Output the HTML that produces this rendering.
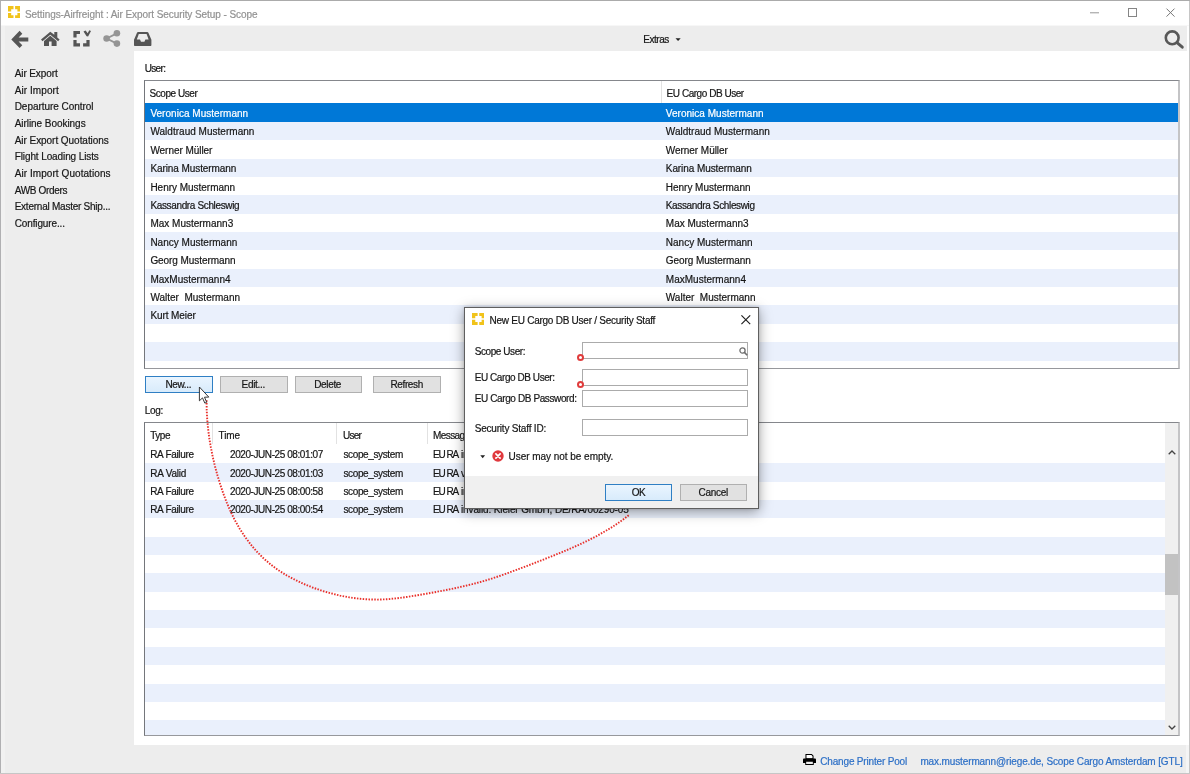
<!DOCTYPE html>
<html>
<head>
<meta charset="utf-8">
<title>Settings-Airfreight : Air Export Security Setup - Scope</title>
<style>
*{box-sizing:border-box;margin:0;padding:0}
html,body{width:1190px;height:774px;overflow:hidden}
body{position:relative;background:#ededed;font-family:"Liberation Sans",sans-serif;font-size:10px;color:#161616;line-height:12px}
#app{position:absolute;left:0;top:0;width:1190px;height:774px;will-change:transform}
.abs{position:absolute}
.t{position:absolute;white-space:pre;line-height:12px;font-size:10px;-webkit-text-stroke:0.200px currentColor}
#titlebar{position:absolute;left:0;top:0;width:1190px;height:25px;background:#fff;border-bottom:1px solid #f7f7f7;box-sizing:content-box}
#toolbar{position:absolute;left:0;top:26px;width:1187px;height:25px;background:#ededed}
#main{position:absolute;left:134px;top:51px;width:1055px;height:694px;background:#fff}
#rightstrip{position:absolute;left:1187px;top:26px;width:2px;height:719px;background:#fefefe}
#rightstrip2{position:absolute;left:1186px;top:745px;width:3px;height:28px;background:#f5f5f5}
#frameL{position:absolute;left:0;top:0;width:1px;height:774px;background:#b0b0b2}
#leftband{position:absolute;left:1px;top:26px;width:4px;height:747px;background:#f1f1f1}
#frameR{position:absolute;left:1189px;top:0;width:1px;height:774px;background:#c6c6c6}
#frameT{position:absolute;left:0;top:0;width:1190px;height:1px;background:#ababab}
#frameB{position:absolute;left:0;top:773px;width:1190px;height:1px;background:#c6c6c6}
.tbl{position:absolute;border:1px solid #85878c;border-left-color:#74767b;border-right:2px solid #c4c4c6;border-bottom-color:#97989c;background:#fff;overflow:hidden}
.row{position:absolute;left:0;width:100%}
.row.alt{background:#eaf0fc}
.row.sel{background:#0078d7;color:#fff}
.btn{position:absolute;height:17px;border:1px solid #b0b0b0;background:#e1e1e1}
.btn.focus{border:1px solid #2f7fc4;background:linear-gradient(#eaf5ff,#d8ebfb)}
.vsep{position:absolute;width:1px;background:#e2e2e2}
#dlg{position:absolute;left:464px;top:307px;width:295px;height:202px;background:#fff;border:1px solid #5f5f5f;box-shadow:0 3px 12px rgba(0,0,0,.38),0 0 3px rgba(0,0,0,.15)}
#dlg .f{position:absolute;left:116.500px;width:166px;height:17px;border:1px solid #ababab;background:#fff}
#dfoot{position:absolute;left:0;top:167.500px;width:293px;height:32.500px;background:#f0f0f0}
.rc{position:absolute;width:7px;height:7px;border:2px solid #e03c3c;border-radius:50%;background:#fff}
</style>
</head>
<body>
<div id="app">
<div id="titlebar">
  <svg class="abs" style="left:7.600px;top:5.800px" width="12.600" height="12.400" viewBox="0 0 12.600 12.600" preserveAspectRatio="none">
    <g fill="#f1c31a"><path d="M0 0h5.500v3.200H3.200v2.300H0z"/><path d="M7.100 0h5.500v5.500H9.400V3.200H7.100z"/><path d="M0 7.100h3.200v2.300h2.300v3.200H0z"/><path d="M12.600 7.100v5.500H7.100V9.400h2.300V7.100z"/></g>
  </svg>
  <span class="t" style="left:25.00px;top:8.50px;letter-spacing:-0.068px;color:#929292;">Settings-Airfreight : Air Export Security Setup - Scope</span>
  <svg class="abs" style="left:1085px;top:5px" width="100" height="18" viewBox="0 0 100 18">
    <path d="M5 7.800h9" stroke="#969696" stroke-width="1" fill="none"/>
    <rect x="43.500" y="3.500" width="8" height="8" stroke="#858585" stroke-width="1" fill="none"/>
    <path d="M81.500 3.600l8 8M89.500 3.600l-8 8" stroke="#777" stroke-width="1" fill="none"/>
  </svg>
</div>
<div id="toolbar">
  <svg class="abs" style="left:0;top:0" width="200" height="25" viewBox="0 26 200 25">
    <g fill="#555">
    <!-- back arrow -->
    <path d="M19.600 30.800L11.300 39.400l8.300 8.500 2.700-2.700-3.700-3.800H28.300v-3.900H18.600l3.700-3.800z"/>
    <!-- home -->
    <path d="M50.300 31.700L41 39.600l1.500 1.700 7.800-6.600 7.800 6.600 1.500-1.700-2.300-2V31.900h-3v2.800z"/>
    <path d="M50.300 35.700L44 41V46h5v-4.600h2.600V46h5V41z"/>
    <!-- fullscreen -->
    <path d="M73.400 30.900h6.600v3.200H76.600v3.300h-3.200z"/>
    <path d="M73.400 46.400v-6.500h3.200v3.300h3.400v3.200z"/>
    <path d="M89.600 46.400h-6.500v-3.200h3.300v-3.300h3.200z"/>
    <path d="M83.500 31.400L85.600 30.500L87.700 33.300L89.300 30.300L91 31.100L88.100 36.400L86.600 36.200Z"/>
    <!-- inbox -->
    <path fill-rule="evenodd" d="M138.200 31.900h9c.6 0 1 .3 1.200.9l3 6.900v5.200c0 .6-.4 1-1 1H135c-.6 0-1-.4-1-1v-5.200l3-6.900c.2-.6.600-.9 1.200-.9zM138.800 34.100l-2 5.400h3.200l1 2.200h3.400l1-2.200h3.200l-2-5.400z"/>
    </g>
    <!-- share -->
    <g fill="#959595"><circle cx="106.600" cy="38.500" r="3.300"/><circle cx="116.900" cy="33.300" r="3.300"/><circle cx="116.900" cy="43.600" r="3.300"/><path d="M106.600 38.500L116.900 33.300M106.600 38.500L116.900 43.600" stroke="#959595" stroke-width="1.900" fill="none"/></g>
  </svg>
  <svg class="abs" style="left:675px;top:12px" width="7" height="4" viewBox="0 0 7 4"><path d="M0.500 0.200h5.200L3.100 3z" fill="#222"/></svg>
  <!-- search -->
  <svg class="abs" style="left:1164px;top:1px" width="22" height="23" viewBox="0 0 22 23"><circle cx="8.200" cy="10.800" r="6.400" stroke="#585858" stroke-width="2.600" fill="none"/><path d="M13 15.600L18.300 20.200" stroke="#585858" stroke-width="2.900" stroke-linecap="round"/></svg>
</div>
<span class="t" style="left:643.20px;top:33.70px;letter-spacing:-0.441px;">Extras</span>
<div id="rightstrip"></div><div id="rightstrip2"></div>
<div id="sidebar">
<span class="t si" style="left:14.70px;top:68.00px;letter-spacing:-0.101px;">Air Export</span>
<span class="t si" style="left:14.70px;top:84.67px;letter-spacing:0.076px;">Air Import</span>
<span class="t si" style="left:14.70px;top:101.34px;letter-spacing:-0.040px;">Departure Control</span>
<span class="t si" style="left:14.70px;top:118.01px;letter-spacing:-0.051px;">Airline Bookings</span>
<span class="t si" style="left:14.70px;top:134.68px;letter-spacing:-0.045px;">Air Export Quotations</span>
<span class="t si" style="left:14.70px;top:151.35px;letter-spacing:-0.104px;">Flight Loading Lists</span>
<span class="t si" style="left:14.70px;top:168.02px;letter-spacing:0.067px;">Air Import Quotations</span>
<span class="t si" style="left:14.70px;top:184.69px;letter-spacing:-0.315px;">AWB Orders</span>
<span class="t si" style="left:14.70px;top:201.36px;letter-spacing:-0.242px;">External Master Ship...</span>
<span class="t si" style="left:14.70px;top:218.03px;letter-spacing:-0.125px;">Configure...</span>

</div>
<div id="main">
  <span class="t" style="left:10.70px;top:12.30px;letter-spacing:-0.661px;">User:</span>
  <div class="tbl" style="left:10px;top:29px;width:1036px;height:289px">
    <span class="t" style="left:4.60px;top:7.30px;letter-spacing:-0.455px;">Scope User</span><span class="t" style="left:521.60px;top:7.40px;letter-spacing:-0.461px;">EU Cargo DB User</span>
    <div class="vsep" style="left:516px;top:0;height:22px"></div>
<div class="row sel" style="top:22.40px;height:18.37px"><span class="t" style="left:5.40px;top:4.60px;letter-spacing:0.027px;">Veronica Mustermann</span><span class="t" style="left:520.80px;top:4.60px;letter-spacing:0.027px;">Veronica Mustermann</span></div>
<div class="row alt" style="top:40.77px;height:18.37px"><span class="t" style="left:5.40px;top:4.63px;letter-spacing:0.022px;">Waldtraud Mustermann</span><span class="t" style="left:520.80px;top:4.63px;letter-spacing:0.022px;">Waldtraud Mustermann</span></div>
<div class="row " style="top:59.14px;height:18.37px"><span class="t" style="left:5.40px;top:4.66px;letter-spacing:-0.047px;">Werner Müller</span><span class="t" style="left:520.80px;top:4.66px;letter-spacing:-0.047px;">Werner Müller</span></div>
<div class="row alt" style="top:77.51px;height:18.37px"><span class="t" style="left:5.40px;top:4.69px;letter-spacing:-0.080px;">Karina Mustermann</span><span class="t" style="left:520.80px;top:4.69px;letter-spacing:-0.080px;">Karina Mustermann</span></div>
<div class="row " style="top:95.88px;height:18.37px"><span class="t" style="left:5.40px;top:4.72px;letter-spacing:-0.021px;">Henry Mustermann</span><span class="t" style="left:520.80px;top:4.72px;letter-spacing:-0.021px;">Henry Mustermann</span></div>
<div class="row alt" style="top:114.25px;height:18.37px"><span class="t" style="left:5.40px;top:4.75px;letter-spacing:-0.353px;">Kassandra Schleswig</span><span class="t" style="left:520.80px;top:4.75px;letter-spacing:-0.353px;">Kassandra Schleswig</span></div>
<div class="row " style="top:132.62px;height:18.37px"><span class="t" style="left:5.40px;top:4.78px;">Max Mustermann3</span><span class="t" style="left:520.80px;top:4.78px;">Max Mustermann3</span></div>
<div class="row alt" style="top:150.99px;height:18.37px"><span class="t" style="left:5.40px;top:4.81px;letter-spacing:0.012px;">Nancy Mustermann</span><span class="t" style="left:520.80px;top:4.81px;letter-spacing:0.012px;">Nancy Mustermann</span></div>
<div class="row " style="top:169.36px;height:18.37px"><span class="t" style="left:5.40px;top:4.84px;letter-spacing:-0.072px;">Georg Mustermann</span><span class="t" style="left:520.80px;top:4.84px;letter-spacing:-0.072px;">Georg Mustermann</span></div>
<div class="row alt" style="top:187.73px;height:18.37px"><span class="t" style="left:5.40px;top:4.87px;letter-spacing:0.012px;">MaxMustermann4</span><span class="t" style="left:520.80px;top:4.87px;letter-spacing:0.012px;">MaxMustermann4</span></div>
<div class="row " style="top:206.10px;height:18.37px"><span class="t" style="left:5.40px;top:4.90px;">Walter&nbsp; Mustermann</span><span class="t" style="left:520.80px;top:4.90px;">Walter&nbsp; Mustermann</span></div>
<div class="row alt" style="top:224.47px;height:18.37px"><span class="t" style="left:5.40px;top:4.93px;letter-spacing:-0.083px;">Kurt Meier</span></div>
<div class="row " style="top:242.84px;height:18.37px"></div>
<div class="row alt" style="top:261.21px;height:18.37px"></div>

  </div>
  <div class="btn focus" style="left:11px;top:325px;width:68px"></div>
  <div class="btn" style="left:86px;top:325px;width:68px"></div>
  <div class="btn" style="left:161px;top:325px;width:67px"></div>
  <div class="btn" style="left:239px;top:325px;width:68px"></div>
  <span class="t" style="left:31.50px;top:327.50px;letter-spacing:-0.366px;">New...</span><span class="t" style="left:107.60px;top:327.50px;letter-spacing:-0.311px;">Edit...</span><span class="t" style="left:180.20px;top:327.50px;letter-spacing:-0.334px;">Delete</span><span class="t" style="left:256.50px;top:327.50px;letter-spacing:-0.388px;">Refresh</span>
  <span class="t" style="left:10.80px;top:353.90px;letter-spacing:-0.367px;">Log:</span>
  <div class="tbl" style="left:10px;top:371px;width:1036px;height:314px">
    <span class="t" style="left:5.20px;top:6.60px;letter-spacing:-0.447px;">Type</span><span class="t" style="left:73.50px;top:6.60px;letter-spacing:-0.090px;">Time</span><span class="t" style="left:198.00px;top:6.60px;letter-spacing:-0.731px;">User</span><span class="t" style="left:288.00px;top:6.60px;letter-spacing:-0.583px;">Message</span>
    <div class="vsep" style="left:67px;top:0;height:21px"></div>
    <div class="vsep" style="left:191px;top:0;height:21px"></div>
    <div class="vsep" style="left:282px;top:0;height:21px"></div>
<div class="row " style="top:21.80px;height:18.37px"><span class="t" style="left:5.20px;top:4.40px;letter-spacing:-0.309px;">RA Failure</span><span class="t" style="left:85.00px;top:4.40px;letter-spacing:-0.419px;">2020-JUN-25 08:01:07</span><span class="t" style="left:198.50px;top:4.40px;letter-spacing:-0.377px;">scope_system</span><span class="t" style="left:288.00px;top:4.40px;letter-spacing:-1.073px;">EU RA</span><span class="t" style="left:316.00px;top:4.40px;letter-spacing:-0.128px;">invalid: Kieler GmbH, DE/RA/00290-05</span></div>
<div class="row alt" style="top:40.17px;height:18.37px"><span class="t" style="left:5.20px;top:4.40px;letter-spacing:-0.203px;">RA Valid</span><span class="t" style="left:85.00px;top:4.40px;letter-spacing:-0.419px;">2020-JUN-25 08:01:03</span><span class="t" style="left:198.50px;top:4.40px;letter-spacing:-0.377px;">scope_system</span><span class="t" style="left:288.00px;top:4.40px;letter-spacing:-1.073px;">EU RA</span><span class="t" style="left:316.00px;top:4.40px;letter-spacing:-0.163px;">valid: Kieler GmbH, DE/RA/00290-05</span></div>
<div class="row " style="top:58.54px;height:18.37px"><span class="t" style="left:5.20px;top:4.40px;letter-spacing:-0.309px;">RA Failure</span><span class="t" style="left:85.00px;top:4.40px;letter-spacing:-0.419px;">2020-JUN-25 08:00:58</span><span class="t" style="left:198.50px;top:4.40px;letter-spacing:-0.377px;">scope_system</span><span class="t" style="left:288.00px;top:4.40px;letter-spacing:-1.073px;">EU RA</span><span class="t" style="left:316.00px;top:4.40px;letter-spacing:-0.128px;">invalid: Kieler GmbH, DE/RA/00290-05</span></div>
<div class="row alt" style="top:76.91px;height:18.37px"><span class="t" style="left:5.20px;top:4.40px;letter-spacing:-0.309px;">RA Failure</span><span class="t" style="left:85.00px;top:4.40px;letter-spacing:-0.419px;">2020-JUN-25 08:00:54</span><span class="t" style="left:198.50px;top:4.40px;letter-spacing:-0.377px;">scope_system</span><span class="t" style="left:288.00px;top:4.40px;letter-spacing:-1.073px;">EU RA</span><span class="t" style="left:316.00px;top:4.40px;letter-spacing:-0.128px;">invalid: Kieler GmbH, DE/RA/00290-05</span></div>
<div class="row " style="top:95.28px;height:18.37px"></div>
<div class="row alt" style="top:113.65px;height:18.37px"></div>
<div class="row " style="top:132.02px;height:18.37px"></div>
<div class="row alt" style="top:150.39px;height:18.37px"></div>
<div class="row " style="top:168.76px;height:18.37px"></div>
<div class="row alt" style="top:187.13px;height:18.37px"></div>
<div class="row " style="top:205.50px;height:18.37px"></div>
<div class="row alt" style="top:223.87px;height:18.37px"></div>
<div class="row " style="top:242.24px;height:18.37px"></div>
<div class="row alt" style="top:260.61px;height:18.37px"></div>
<div class="row " style="top:278.98px;height:18.37px"></div>
<div class="row alt" style="top:297.35px;height:18.37px"></div>

    <div class="abs" style="left:1020px;top:0;width:14px;height:312px;background:#f0f0f0"></div>
    <div class="abs" style="left:1020px;top:131px;width:14px;height:41px;background:#c2c2c2"></div>
    <svg class="abs" style="left:1023px;top:27px" width="8" height="5" viewBox="0 0 8 5"><path d="M0.700 4.300L4 1l3.300 3.300" stroke="#444" stroke-width="1.300" fill="none"/></svg>
    <svg class="abs" style="left:1023px;top:302px" width="8" height="5" viewBox="0 0 8 5"><path d="M0.700 0.700L4 4l3.300-3.300" stroke="#444" stroke-width="1.300" fill="none"/></svg>
  </div>
</div>
<!-- dotted curve -->
<svg class="abs" style="left:0;top:0" width="1190" height="774" viewBox="0 0 1190 774"><path d="M206.6 400.2 L206.7 409.8 L207.2 419.3 L208.1 428.8 L209.3 438.3 L210.9 447.7 L212.8 457.1 L215.0 466.3 L217.5 475.6 L220.3 484.7 L223.4 493.8 L226.8 502.7 L230.6 511.5 L234.8 520.1 L239.5 528.4 L244.8 536.5 L250.5 544.2 L256.7 551.5 L263.5 558.3 L270.7 564.5 L278.4 570.2 L286.5 575.3 L295.0 579.8 L303.7 583.9 L312.6 587.5 L321.6 590.7 L330.8 593.3 L340.0 595.6 L349.4 597.4 L358.9 598.7 L368.5 599.4 L378.0 599.6 L387.5 599.2 L397.0 598.3 L406.5 597.0 L416.0 595.5 L425.4 593.9 L434.8 592.2 L444.2 590.4 L453.6 588.5 L462.9 586.4 L472.2 584.2 L481.4 581.7 L490.5 579.0 L499.5 576.0 L508.5 572.8 L517.5 569.5 L526.4 566.1 L535.4 562.7 L544.3 559.2 L553.2 555.7 L562.0 552.1 L570.8 548.4 L579.6 544.5 L588.2 540.4 L596.6 536.1 L604.9 531.4 L613.1 526.5 L621.0 521.1 L628.7 515.3" stroke="#e9302b" stroke-width="1.900" stroke-dasharray="1.500 1.400" fill="none"/></svg>
<!-- dialog -->
<div id="dlg">
  <svg class="abs" style="left:6.600px;top:5.200px" width="12.900" height="12" viewBox="0 0 12.600 12.600" preserveAspectRatio="none">
    <g fill="#f1c31a"><path d="M0 0h5.500v3.200H3.200v2.300H0z"/><path d="M7.100 0h5.500v5.500H9.400V3.200H7.100z"/><path d="M0 7.100h3.200v2.300h2.300v3.200H0z"/><path d="M12.600 7.100v5.500H7.100V9.400h2.300V7.100z"/></g>
  </svg>
  <span class="t" style="left:24.50px;top:6.80px;letter-spacing:-0.251px;">New EU Cargo DB User / Security Staff</span>
  <svg class="abs" style="left:276px;top:7px" width="10" height="10" viewBox="0 0 10 10"><path d="M0.400 0.400l8.800 8.800M9.200 0.400l-8.800 8.800" stroke="#222" stroke-width="1.200" fill="none"/></svg>
  <span class="t" style="left:9.70px;top:38.10px;letter-spacing:-0.421px;">Scope User:</span>
  <div class="f" style="top:34.200px"></div>
  <svg class="abs" style="left:273.500px;top:39px" width="9" height="9" viewBox="0 0 9 9"><circle cx="3.500" cy="3.500" r="2.600" stroke="#6e6e6e" stroke-width="1.300" fill="none"/><path d="M5.400 5.400L8.200 8.200" stroke="#6e6e6e" stroke-width="1.600"/></svg>
  <div class="rc" style="left:112.100px;top:45.900px"></div>
  <span class="t" style="left:9.70px;top:64.40px;letter-spacing:-0.432px;">EU Cargo DB User:</span>
  <div class="f" style="top:60.600px"></div>
  <div class="rc" style="left:112.100px;top:72.500px"></div>
  <span class="t" style="left:9.70px;top:85.10px;letter-spacing:-0.388px;">EU Cargo DB Password:</span>
  <div class="f" style="top:81.700px"></div>
  <span class="t" style="left:9.70px;top:115.00px;letter-spacing:-0.197px;">Security Staff ID:</span>
  <div class="f" style="top:111.300px"></div>
  <svg class="abs" style="left:15px;top:147px" width="6" height="4" viewBox="0 0 6 4"><path d="M0.300 0.200h4.800L2.700 3.200z" fill="#222"/></svg>
  <svg class="abs" style="left:26.700px;top:142.100px" width="12" height="12" viewBox="0 0 12 12"><circle cx="6" cy="6" r="5.700" fill="#e0393e"/><path d="M3.900 3.900l4.200 4.200M8.100 3.900l-4.200 4.200" stroke="#fff" stroke-width="1.700" stroke-linecap="round"/></svg>
  <span class="t" style="left:43.50px;top:143.20px;letter-spacing:-0.033px;">User may not be empty.</span>
  <div id="dfoot"></div>
  <div class="btn focus" style="left:140px;top:175.500px;width:67px;height:17.500px"></div>
  <div class="btn" style="left:215px;top:175.500px;width:67px;height:17.500px"></div>
  <span class="t" style="left:166.80px;top:179.20px;letter-spacing:-0.627px;">OK</span><span class="t" style="left:233.50px;top:179.20px;letter-spacing:-0.273px;">Cancel</span>
</div>
<!-- cursor -->
<svg class="abs" style="left:198px;top:386px" width="13" height="19" viewBox="0 0 13 19"><path d="M1.400 1v13.800l3.100-2.900 2.300 5.200 1.900-0.800-2.200-5.100 4.300-0.100z" fill="#fff" stroke="#222" stroke-width="0.900" stroke-linejoin="miter"/></svg>
<div id="statusbar">
  <svg class="abs" style="left:802.600px;top:754px" width="13" height="11.500" viewBox="0 0 14 12" preserveAspectRatio="none"><path d="M3.200 0.500h6l1.600 1.600V5H3.200z" fill="#fff" stroke="#000" stroke-width="1.100"/><path d="M1.200 4.600h11.600c.7 0 1.200.5 1.200 1.200V9.500h-2.400V11.500H2.400V9.500H0V5.800c0-.7.500-1.200 1.200-1.200zM3.400 8v2.500h7.200V8z" fill="#000" fill-rule="evenodd"/></svg>
  <span class="t" style="left:820.30px;top:755.70px;letter-spacing:-0.177px;color:#2c6fc6;">Change Printer Pool</span>
  <span class="t" style="left:920.40px;top:755.70px;letter-spacing:-0.123px;color:#2c6fc6;">max.mustermann@riege.de, Scope Cargo Amsterdam [GTL]</span>
</div>
<div id="leftband"></div><div id="frameL"></div><div id="frameR"></div><div id="frameT"></div><div id="frameB"></div>
</div>
</body>
</html>
